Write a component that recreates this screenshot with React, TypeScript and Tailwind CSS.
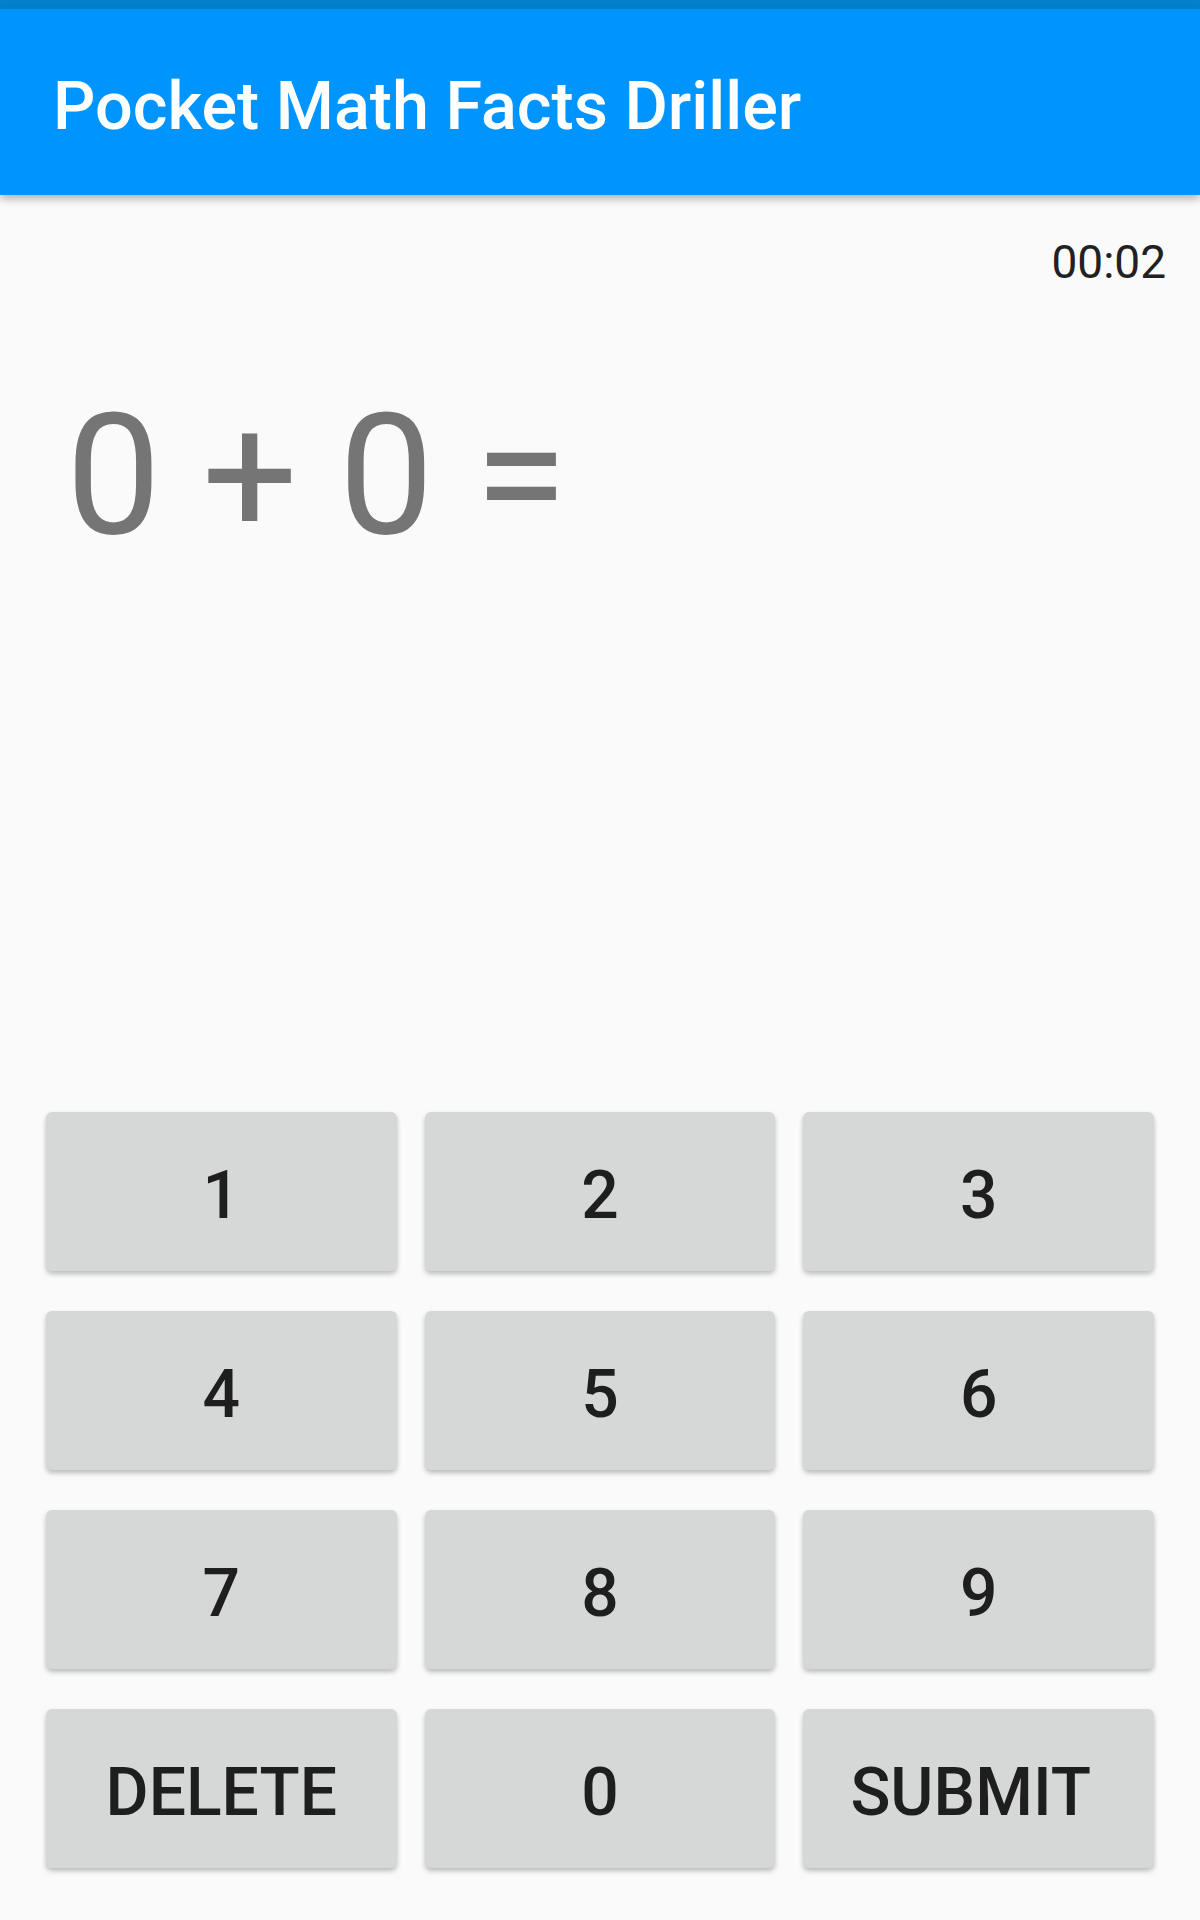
const keys = ['1', '2', '3', '4', '5', '6', '7', '8', '9', 'DELETE', '0', 'SUBMIT'];

export default function App() {
  return (
    <div className="flex h-[1920px] flex-col bg-[#fafafa] font-['Roboto',sans-serif]">
      <div className="h-[9px] bg-[#0280cc]" />
      <header className="relative z-10 flex h-[186px] items-center bg-[#0094ff] pl-[53px] pt-[8px] shadow-[0_4px_8px_rgba(0,0,0,0.28)]">
        <h1 className="text-[66.5px] font-medium leading-none text-white">Pocket Math Facts Driller</h1>
      </header>

      <div className="mt-[44px] flex justify-end pr-[34px]">
        <span className="text-[46px] leading-none text-[#212121]">00:02</span>
      </div>

      <div className="mt-[106px] pl-[66px]">
        <span className="whitespace-pre text-[169px] leading-none tracking-[-0.5px] text-[#757575]">0 + 0 =</span>
      </div>

      <div className="flex-1" />

      <div className="grid grid-cols-3 gap-x-[28px] gap-y-[40px] px-[46px] pb-[52px]">
        {keys.map((k) => (
          <button
            key={k}
            className={`flex h-[159px] items-center justify-center rounded-[6px] bg-[#d6d7d7] pt-[8px] text-[66px] font-medium leading-none text-[#1e1e1e] shadow-[0_3px_5px_rgba(0,0,0,0.25)] ${k === 'SUBMIT' ? 'pr-[16px]' : ''}`}
          >
            {k}
          </button>
        ))}
      </div>
    </div>
  );
}
